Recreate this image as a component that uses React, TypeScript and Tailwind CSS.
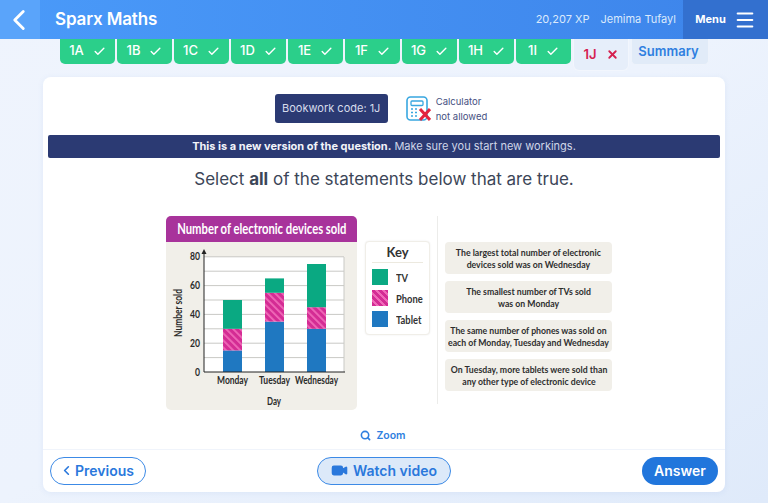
import React from "react";
import { Check, ChevronLeft, Menu, Search, Video, X } from "lucide-react";

const tabs = ["1A", "1B", "1C", "1D", "1E", "1F", "1G", "1H", "1I"];

const statements = [
  ["The largest total number of electronic", "devices sold was on Wednesday"],
  ["The smallest number of TVs sold", "was on Monday"],
  ["The same number of phones was sold on", "each of Monday, Tuesday and Wednesday"],
  ["On Tuesday, more tablets were sold than", "any other type of electronic device"],
];

const bars = [
  { day: "Monday", x: 57, labelWidth: 31, tablet: 15, phone: 15, tv: 20 },
  { day: "Tuesday", x: 99, labelWidth: 31, tablet: 35, phone: 20, tv: 10 },
  { day: "Wednesday", x: 141, labelWidth: 43, tablet: 30, phone: 15, tv: 30 },
];

const chartFont = { fontFamily: 'Lato, "Open Sans", sans-serif' };
const unit = 1.44;
const baseY = 130;

function Chart() {
  return (
    <svg width="191" height="168" viewBox="0 0 191 168" style={chartFont}>
      <defs>
        <pattern id="hatch" width="5" height="5" patternUnits="userSpaceOnUse" patternTransform="rotate(-45)">
          <rect width="5" height="5" fill="#d42c94" />
          <rect width="1.8" height="5" fill="#f06ab8" />
        </pattern>
      </defs>
      <rect x="38" y="15" width="140" height="115" fill="#ffffff" />
      {[1, 2, 3, 4, 5, 6, 7, 8].map((n) => (
        <line key={n} x1="38" x2="178" y1={baseY - n * 10 * unit} y2={baseY - n * 10 * unit} stroke="#c9c9c5" strokeWidth="1" />
      ))}
      <line x1="178" x2="178" y1="15" y2="130" stroke="#c9c9c5" />
      {bars.map((b) => {
        const tabletTop = baseY - b.tablet * unit;
        const phoneTop = tabletTop - b.phone * unit;
        const tvTop = phoneTop - b.tv * unit;
        return (
          <g key={b.day}>
            <rect x={b.x} y={tabletTop} width="19" height={b.tablet * unit} fill="#1f78c1" />
            <rect x={b.x} y={phoneTop} width="19" height={b.phone * unit} fill="url(#hatch)" />
            <rect x={b.x} y={tvTop} width="19" height={b.tv * unit} fill="#0aa982" />
            <text x={b.x + 9.5} y="142" textAnchor="middle" fontSize="10.5" fontWeight="700" fill="#2b2b2b" textLength={b.labelWidth} lengthAdjust="spacingAndGlyphs">
              {b.day}
            </text>
          </g>
        );
      })}
      <line x1="38" x2="38" y1="10" y2="130" stroke="#222222" strokeWidth="1" />
      <line x1="38" x2="179" y1="130" y2="130" stroke="#222222" strokeWidth="1" />
      <polygon points="38,7 35.5,12 40.5,12" fill="#222222" />
      {[0, 20, 40, 60, 80].map((v) => (
        <text key={v} x="34" y={baseY - v * unit + 3.5} textAnchor="end" fontSize="11" fontWeight="700" fill="#2b2b2b" lengthAdjust="spacingAndGlyphs" textLength={v === 0 ? 5 : 10}>
          {v}
        </text>
      ))}
      <text transform="translate(16 71) rotate(-90)" textAnchor="middle" fontSize="10.5" fontWeight="700" fill="#2b2b2b" textLength="48" lengthAdjust="spacingAndGlyphs">
        Number sold
      </text>
      <text x="108" y="163" textAnchor="middle" fontSize="10.5" fontWeight="700" fill="#2b2b2b" textLength="14" lengthAdjust="spacingAndGlyphs">
        Day
      </text>
    </svg>
  );
}

function KeyRow({ label, swatch }: { label: string; swatch: string }) {
  return (
    <div className="flex items-center gap-[8px] h-[21px]">
      <div className={`shrink-0 w-[16px] h-[16px] ${swatch}`} />
      <span className="text-[11px] font-bold text-[#333] leading-none inline-block origin-left scale-x-[0.85] whitespace-nowrap">{label}</span>
    </div>
  );
}

export default function App() {
  return (
    <div
      className="relative w-[768px] h-[503px] overflow-hidden bg-gradient-to-br from-[#eff4fd] via-[#edf3fd] to-[#dfeafa]"
      style={{ fontFamily: 'Inter, "Noto Sans", sans-serif' }}
    >
      {/* Top bar */}
      <header className="flex items-center h-[39px] bg-gradient-to-r from-[#4a9af9] to-[#3d84ea] text-white">
        <div className="flex items-center justify-center w-[40px] h-full pr-[3px] bg-[#5aa4fa]">
          <ChevronLeft className="w-[34px] h-[34px]" strokeWidth={2} />
        </div>
        <div className="ml-[15px] text-[17px] font-semibold tracking-[-0.15px]">Sparx Maths</div>
        <div className="ml-auto text-[11px] text-[#dbe9fc]">20,207 XP</div>
        <div className="ml-[11px] mr-[7px] text-[11px] text-[#dbe9fc]">Jemima Tufayl</div>
        <div className="flex items-center justify-center gap-[8px] w-[85px] h-full bg-[#3370cf]">
          <span className="text-[11px] font-bold">Menu</span>
          <Menu className="w-[22px] h-[22px]" strokeWidth={2.2} />
        </div>
      </header>

      {/* Part tabs */}
      <nav className="flex items-start gap-[2px] pl-[60px]">
        {tabs.map((t) => (
          <div key={t} className="flex items-center justify-center gap-[9px] w-[55px] h-[25px] rounded-b-[5px] bg-[#2bcf8a] text-white text-[13px] font-medium">
            <span className="pb-[2px]">{t}</span>
            <Check className="w-[13px] h-[13px]" strokeWidth={2.6} />
          </div>
        ))}
        <div className="flex items-center justify-center gap-[9px] w-[56px] h-[32px] rounded-b-[6px] bg-[#e6eefa] border border-t-0 border-[#f2f6fd] text-[#d5204f] text-[13px] font-semibold">
          <span>1J</span>
          <X className="w-[13px] h-[13px]" strokeWidth={3.4} />
        </div>
        <div className="flex items-center justify-center w-[78px] h-[26px] pr-[3px] rounded-b-[5px] bg-[#e1ebf8] border border-t-0 border-[#eef3fb] text-[#2f7fe0] text-[13px] font-semibold">
          Summary
        </div>
      </nav>

      {/* Question card */}
      <main className="mx-auto mt-[6px] flex flex-col w-[682px] h-[415px] rounded-[8px] bg-white shadow-[0_1px_6px_rgba(60,110,190,0.08)]">
        <div className="flex items-start justify-center gap-[18px] mt-[17px] pr-[6px]">
          <div className="flex items-center justify-center w-[113px] h-[29px] rounded-[3px] bg-[#2b3a73] text-[#d6dcec] text-[11px]">
            Bookwork code: 1J
          </div>
          <div className="flex items-start gap-[5px]">
            <svg className="mt-[2px]" width="25" height="26" viewBox="0 0 25 26" fill="none">
              <rect x="1" y="1" width="20" height="23" rx="3.5" stroke="#38a7e0" strokeWidth="1.6" />
              <rect x="5" y="5" width="12" height="4.5" rx="1" stroke="#38a7e0" strokeWidth="1.3" />
              <path d="M5 13h2M9 13h2M5 16.5h2M9 16.5h2M5 20h2M9 20h2" stroke="#38a7e0" strokeWidth="1.7" />
              <path d="M14 13l10 11M24 13L14 24" stroke="#e3243f" strokeWidth="3" />
            </svg>
            <div className="text-[9.5px] leading-[15px] text-[#45507f]">
              <div>Calculator</div>
              <div>not allowed</div>
            </div>
          </div>
        </div>

        <div className="mx-[5px] mt-[11px] flex items-center justify-center h-[23px] rounded-[2px] bg-[#2b3a73] text-[11px] text-[#cfd6e8]">
          <span className="font-bold text-[#f2f4fa] mr-[3px]">This is a new version of the question.</span>
          Make sure you start new workings.
        </div>

        <p className="mt-[9px] text-center text-[17px] leading-[24px] text-[#3c4658]">
          Select <b className="font-bold">all</b> of the statements below that are true.
        </p>

        {/* Question image */}
        <div className="flex items-start mt-[25px] pl-[123px]">
          <div className="w-[191px] h-[194px] rounded-[5px] overflow-hidden bg-[#f1efe9]">
            <div className="flex items-center justify-center h-[26px] bg-[#a8339b] text-white text-[15px] font-bold whitespace-nowrap" style={chartFont}>
              <span className="inline-block scale-x-[0.75]">Number of electronic devices sold</span>
            </div>
            <Chart />
          </div>

          <div className="ml-[8px] mt-[25px] flex flex-col w-[65px] h-[94px] px-[6px] pt-[3px] rounded-[4px] bg-white border border-[#f0eee8] shadow-[0_0_2px_rgba(0,0,0,0.08)]" style={chartFont}>
            <div className="h-[18px] border-b border-[#ece9df] text-center text-[13px] font-bold leading-[15px] text-[#333]">Key</div>
            <div className="mt-[4px] flex flex-col">
              <KeyRow label="TV" swatch="bg-[#0aa982]" />
              <KeyRow label="Phone" swatch="bg-[repeating-linear-gradient(45deg,#d42c94,#d42c94_3px,#f06ab8_3px,#f06ab8_5px)]" />
              <KeyRow label="Tablet" swatch="bg-[#1f78c1]" />
            </div>
          </div>

          <div className="ml-[7px] w-px h-[188px] bg-[#ececea]" />

          <div className="ml-[7px] mt-[26px] flex flex-col gap-[7px] w-[167px]" style={chartFont}>
            {statements.map(([a, b]) => (
              <div key={a} className="flex items-center justify-center h-[32px] rounded-[4px] bg-[#f1efe9]">
                <p className="shrink-0 scale-x-[0.87] text-center text-[10px] font-bold leading-[12px] text-[#2e2e2e] whitespace-nowrap">
                  {a}
                  <br />
                  {b}
                </p>
              </div>
            ))}
          </div>
        </div>

        <div className="flex items-center justify-center gap-[5px] mt-[18px] pr-[2px] text-[#2f7fe0] text-[10.5px] font-semibold">
          <Search className="w-[11px] h-[11px]" strokeWidth={3.5} />
          Zoom
        </div>

        {/* Footer buttons */}
        <footer className="mt-[6px] grid grid-cols-3 items-center h-[43px] px-[7px] border-t border-[#f0f4fb]">
          <button className="justify-self-start flex items-center justify-center gap-[1px] w-[96px] h-[28px] pr-[3px] pb-[2px] rounded-full border border-[#3c8ae6] bg-white text-[#2a78dc] text-[14px] font-semibold">
            <ChevronLeft className="w-[15px] h-[15px]" strokeWidth={2.6} />
            Previous
          </button>
          <button className="justify-self-center flex items-center justify-center gap-[5px] w-[134px] h-[28px] pb-[2px] rounded-full border border-[#3c8ae6] bg-[#dce9f9] text-[#2a78dc] text-[14px] font-semibold">
            <Video className="w-[17px] h-[17px] fill-[#2a78dc]" strokeWidth={2} />
            Watch video
          </button>
          <button className="justify-self-end flex items-center justify-center w-[76px] h-[28px] pb-[2px] rounded-full bg-[#2176dc] text-white text-[14px] font-semibold">
            Answer
          </button>
        </footer>
      </main>
    </div>
  );
}
